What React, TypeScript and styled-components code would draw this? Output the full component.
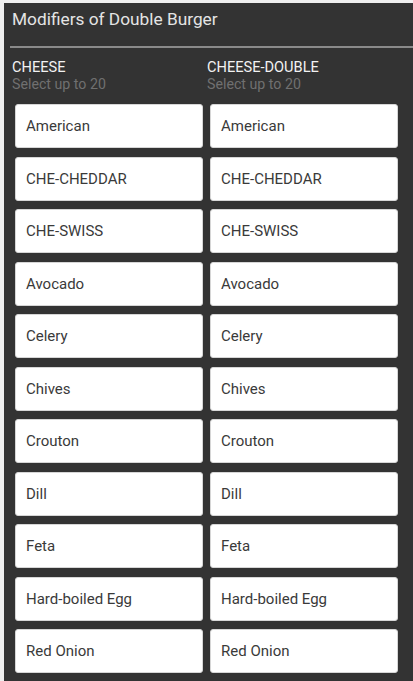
import React from "react";
import styled, { createGlobalStyle } from "styled-components";

const GlobalStyle = createGlobalStyle`
  html, body {
    margin: 0;
    padding: 0;
    background: #efefef;
    font-family: Roboto, "Noto Sans", "Liberation Sans", sans-serif;
  }
  * { box-sizing: border-box; }
`;

const Page = styled.div`
  padding: 3px 0 0 4px;
  height: 681px;
  overflow: hidden;
`;

const Panel = styled.div`
  background: #333333;
  height: 100%;
  display: flex;
  flex-direction: column;
`;

const Title = styled.h1`
  margin: 0;
  padding: 6px 0 0 8px;
  height: 43px;
  font-size: 17.3px;
  line-height: 20px;
  font-weight: 400;
  color: #e4e4e4;
`;

const Divider = styled.div`
  height: 2px;
  margin-left: 6px;
  background: #8a8a8a;
`;

const Columns = styled.div`
  display: grid;
  grid-template-columns: 195px 195px;
  padding: 11px 0 0 8px;
`;

const Column = styled.section`
  display: flex;
  flex-direction: column;
`;

const GroupName = styled.div`
  font-size: 14.6px;
  line-height: 17px;
  color: #f2f2f2;
`;

const GroupHint = styled.div`
  font-size: 14.2px;
  line-height: 17px;
  color: #707070;
`;

const OptionList = styled.div`
  display: flex;
  flex-direction: column;
  gap: 8.5px;
  padding: 11px 4px 0 3px;
`;

const Option = styled.button`
  height: 44px;
  width: 100%;
  background: #ffffff;
  border: 1px solid #d6d6d6;
  border-radius: 3px;
  padding: 0 0 0 10px;
  text-align: left;
  font-family: inherit;
  font-size: 15px;
  color: #3a3a3a;
  cursor: pointer;
`;

const options = [
  "American",
  "CHE-CHEDDAR",
  "CHE-SWISS",
  "Avocado",
  "Celery",
  "Chives",
  "Crouton",
  "Dill",
  "Feta",
  "Hard-boiled Egg",
  "Red Onion",
];

const groups = [
  { name: "CHEESE", hint: "Select up to 20" },
  { name: "CHEESE-DOUBLE", hint: "Select up to 20" },
];

export default function App() {
  return (
    <>
      <GlobalStyle />
      <Page>
        <Panel>
          <Title>Modifiers of Double Burger</Title>
          <Divider />
          <Columns>
            {groups.map((g) => (
              <Column key={g.name}>
                <GroupName>{g.name}</GroupName>
                <GroupHint>{g.hint}</GroupHint>
                <OptionList>
                  {options.map((o) => (
                    <Option key={o}>{o}</Option>
                  ))}
                </OptionList>
              </Column>
            ))}
          </Columns>
        </Panel>
      </Page>
    </>
  );
}
